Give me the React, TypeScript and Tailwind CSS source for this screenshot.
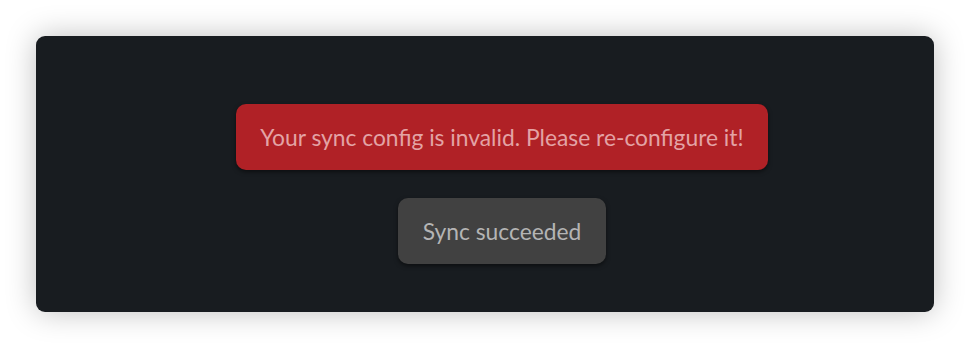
export default function App() {
  return (
    <div className="w-[970px] h-[348px] bg-white p-[36px]" style={{ fontFamily: 'Lato, "Noto Sans", sans-serif' }}>
      <div className="h-[276px] rounded-[9px] bg-[#181c20] shadow-[0_0_30px_rgba(0,0,0,0.25)] flex flex-col items-center pt-[68px] pl-[34px] gap-[28px]">
        <div className="h-[66px] px-[24px] rounded-[10px] bg-[#b02126] text-[#e3a3a5] text-[22.8px] flex items-center shadow-[0_2px_4px_rgba(0,0,0,0.5)]">
          Your sync config is invalid. Please re-configure it!
        </div>
        <div className="h-[66px] px-[25px] rounded-[10px] bg-[#414141] text-[#b4b4b4] text-[22.8px] flex items-center shadow-[0_2px_4px_rgba(0,0,0,0.5)]">
          Sync succeeded
        </div>
      </div>
    </div>
  );
}
